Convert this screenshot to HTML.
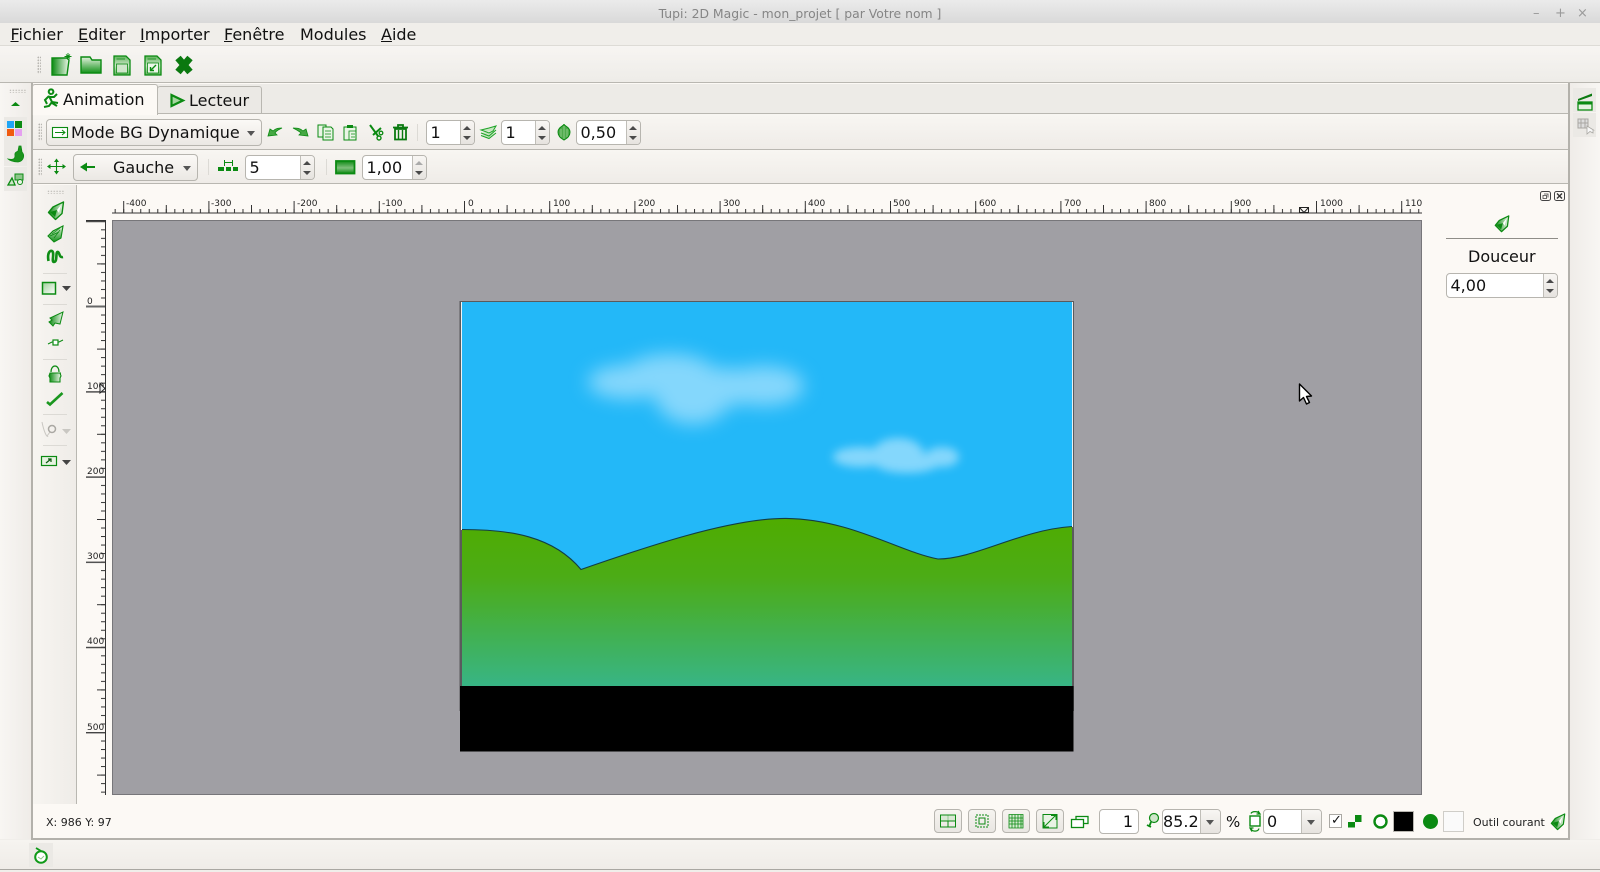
<!DOCTYPE html>
<html lang="fr"><head><meta charset="utf-8"><title>Tupi</title>
<style>
html,body{margin:0;padding:0;width:1600px;height:872px;overflow:hidden;background:#f0eeea}
body{font-family:"DejaVu Sans","Liberation Sans",sans-serif;color:#111;position:relative}
div,span,svg{position:absolute;box-sizing:border-box}
.t{white-space:nowrap}
.m{top:24px;height:23px;line-height:22px;font-size:16px;white-space:nowrap}
.h{left:0;width:1600px}
.sp,.cb{background:#fff;border:1px solid #b7b5af;border-radius:4px}
.sp>span,.cb>span{font-size:16px;line-height:23px;white-space:nowrap;top:0;left:3.5px}
.b{right:0;top:0;bottom:0;width:14px;border-left:1px solid #c0beb8;background:linear-gradient(#f8f6f3,#e6e3df);border-radius:0 3px 3px 0}
.b::before,.b::after{content:"";position:absolute;left:2px;border-left:4.5px solid transparent;border-right:4.5px solid transparent}
.b::before{top:5px;border-bottom:4.5px solid #4a4a4a}
.b::after{bottom:4px;border-top:4.5px solid #4a4a4a}
.b.dis::before{border-bottom-color:#aaa}
.nb{right:0;top:0;bottom:0;width:20px;border-left:1px solid #c0beb8;background:linear-gradient(#f8f6f3,#e6e3df);border-radius:0 3px 3px 0}
.cb{background:linear-gradient(#fbf9f6,#ebe8e4)}
.dd{width:0;height:0;border-left:4.5px solid transparent;border-right:4.5px solid transparent;border-top:5px solid #555}
.tb{background:linear-gradient(#f6f4f0,#e9e6e2);border:1px solid #b7b5af;border-radius:4px;top:809px;height:24px}
.sep{background:#dcdad5}
.hd{width:4px;background-image:radial-gradient(#b5b3ae 0.7px,transparent 0.8px);background-size:2.6px 2.9px}
.hh{height:4px;background-image:radial-gradient(#b5b3ae 0.7px,transparent 0.8px);background-size:2.9px 2.6px}
</style></head><body>

<div class="h" style="top:0;height:23px;background:linear-gradient(#ebebeb,#d9d9d9)"></div>
<div class="t" style="left:0;width:1600px;top:5px;text-align:center;font-size:12.4px;line-height:17px;color:#858585">Tupi: 2D Magic - mon_projet [ par Votre nom ]</div>
<div class="t" style="left:1533px;top:5px;font-size:13px;line-height:17px;color:#9a9a9a">–</div>
<div class="t" style="left:1555px;top:5px;font-size:13px;line-height:17px;color:#9a9a9a">+</div>
<div class="t" style="left:1577px;top:5px;font-size:13px;line-height:17px;color:#9a9a9a">×</div>

<div class="h" style="top:23px;height:23px;background:#f0eeea;border-bottom:1px solid #dddbd6"></div>
<div class="m" style="left:10.500px"><u>F</u>ichier</div>
<div class="m" style="left:78px"><u>E</u>diter</div>
<div class="m" style="left:140px"><u>I</u>mporter</div>
<div class="m" style="left:224px"><u>F</u>enêtre</div>
<div class="m" style="left:300px">Modules</div>
<div class="m" style="left:381px"><u>A</u>ide</div>

<div class="h" style="top:46px;height:37px;background:linear-gradient(#f7f5f2,#eeece8);border-bottom:1px solid #b9b7b1"></div>
<div class="hd" style="left:37px;top:56px;height:18px"></div>

<div style="left:0;top:83px;width:31px;height:756px;background:linear-gradient(90deg,#f8f6f3,#efece8)"></div>
<div class="hh" style="left:9px;top:89px;width:17px"></div>
<div style="left:4px;top:117px;width:23px;height:25px;background:#ebe9e5"></div>
<div style="left:4px;top:142px;width:23px;height:24px;background:#ebe9e5"></div>
<div style="left:4px;top:167px;width:23px;height:24px;background:#ebe9e5"></div>

<div style="left:1569px;top:83px;width:31px;height:756px;background:linear-gradient(90deg,#efece8,#f8f6f3)"></div>
<div style="left:1573px;top:88px;width:23px;height:24px;background:#ebe9e5"></div>
<div style="left:1573px;top:113px;width:23px;height:24px;background:#ebe9e5"></div>

<div class="h" style="top:840px;height:29px;background:linear-gradient(#f6f4f0,#efece8)"></div>
<div class="h" style="top:869px;height:1px;background:#a9a7a2"></div>
<div class="h" style="top:870px;height:2px;background:#f0eeea"></div>

<div style="left:31px;top:83px;width:1539px;height:757px;background:#fcf9f5;border:2px solid #b3b1ab;border-top:0"></div>
<div style="left:33px;top:84px;width:1535px;height:30px;background:#edebe7;border-bottom:1px solid #b9b7b1"></div>
<div style="left:33px;top:114px;width:1535px;height:36px;background:linear-gradient(#f8f6f2,#efece8);border-bottom:1px solid #b9b7b1"></div>
<div style="left:33px;top:150px;width:1535px;height:34px;background:linear-gradient(#f8f6f2,#efece8);border-bottom:1px solid #b9b7b1"></div>

<div style="left:157px;top:86px;width:105px;height:28px;background:#ebe9e5;border:1px solid #b9b7b1;border-radius:3px 3px 0 0"></div>
<div style="left:32px;top:84px;width:126px;height:31px;background:#fcf9f5;border:1px solid #b9b7b1;border-bottom:0;border-radius:3px 3px 0 0"></div>
<div class="t" style="left:63px;top:90px;font-size:16px;line-height:20px">Animation</div>
<div class="t" style="left:189px;top:91px;font-size:16px;line-height:20px">Lecteur</div>

<div class="hd" style="left:38px;top:123px;height:18px"></div>
<div class="cb" style="left:46px;top:119px;width:216px;height:27px"><span style="left:24px;top:1px">Mode BG Dynamique</span><div class="dd" style="left:200px;top:11px"></div></div>
<div class="sep" style="left:417px;top:124px;width:1px;height:17px"></div>
<div class="sp" style="left:426px;top:120px;width:49px;height:25px"><span>1</span><div class="b"></div></div>
<div class="sp" style="left:501px;top:120px;width:49px;height:25px"><span>1</span><div class="b"></div></div>
<div class="sp" style="left:576px;top:120px;width:65px;height:25px"><span>0,50</span><div class="b"></div></div>

<div class="hd" style="left:38px;top:158px;height:18px"></div>
<div class="cb" style="left:73px;top:154px;width:125px;height:27px"><span style="left:39px;top:1px">Gauche</span><div class="dd" style="left:109px;top:11px"></div></div>
<div class="sep" style="left:208px;top:159px;width:1px;height:16px"></div>
<div class="sp" style="left:245px;top:155px;width:70px;height:25px"><span>5</span><div class="b"></div></div>
<div class="sep" style="left:326px;top:159px;width:1px;height:16px"></div>
<div class="sp" style="left:362px;top:155px;width:65px;height:25px"><span>1,00</span><div class="b dis"></div></div>

<div style="left:33px;top:185px;width:44px;height:619px;background:linear-gradient(90deg,#f7f5f1,#efece8);border-right:1px solid #b9b7b1"></div>
<div class="hh" style="left:47px;top:190px;width:17px"></div>
<div class="sep" style="left:43px;top:273px;width:24px;height:1px"></div>
<div class="sep" style="left:43px;top:304px;width:24px;height:1px"></div>
<div class="sep" style="left:43px;top:359px;width:24px;height:1px"></div>
<div class="sep" style="left:43px;top:414px;width:24px;height:1px"></div>
<div class="sep" style="left:43px;top:445px;width:24px;height:1px"></div>

<div style="left:112px;top:220px;width:1310px;height:575px;background:#a09fa4;border:1px solid #77767a"></div>

<div class="tb" style="left:934px;width:28px"></div>
<div class="tb" style="left:968px;width:28px"></div>
<div class="tb" style="left:1002px;width:28px"></div>
<div class="tb" style="left:1036px;width:28px"></div>

<svg style="left:0;top:0" width="1600" height="872" viewBox="0 0 1600 872" font-family="'DejaVu Sans','Liberation Sans',sans-serif">
<defs>
<linearGradient id="gr" x1="0" y1="0" x2="1" y2="1"><stop offset="0" stop-color="#9fd09a"/><stop offset="1" stop-color="#ffffff"/></linearGradient>
<linearGradient id="gh" x1="0" y1="0" x2="1" y2="0"><stop offset="0" stop-color="#0b8a12"/><stop offset="1" stop-color="#eef6ea"/></linearGradient>
<linearGradient id="gv" x1="0" y1="0" x2="0" y2="1"><stop offset="0" stop-color="#e4f1de"/><stop offset="1" stop-color="#13921a"/></linearGradient>
<linearGradient id="gv2" x1="0" y1="0" x2="0" y2="1"><stop offset="0" stop-color="#5fb35c"/><stop offset=".5" stop-color="#cfe7ca"/><stop offset="1" stop-color="#5fb35c"/></linearGradient>
<linearGradient id="gv3" x1="0" y1="0" x2="0" y2="1"><stop offset="0" stop-color="#0f8b15"/><stop offset=".55" stop-color="#7fbf7b"/><stop offset="1" stop-color="#0f8b15"/></linearGradient>
<linearGradient id="land" x1="0" y1="518" x2="0" y2="686" gradientUnits="userSpaceOnUse"><stop offset="0" stop-color="#4fac00"/><stop offset=".35" stop-color="#4cac16"/><stop offset="1" stop-color="#38b585"/></linearGradient>
<filter id="b1" x="-30%" y="-60%" width="160%" height="220%"><feGaussianBlur stdDeviation="9"/></filter>
<filter id="b2" x="-30%" y="-60%" width="160%" height="220%"><feGaussianBlur stdDeviation="4.500"/></filter>
<pattern id="hmin" patternUnits="userSpaceOnUse" x="464" y="0" width="8.52" height="900"><rect width="1" height="900" fill="#333"/></pattern>
<pattern id="hmid" patternUnits="userSpaceOnUse" x="421.4" y="0" width="85.2" height="900"><rect width="1" height="900" fill="#333"/></pattern>
<pattern id="hmaj" patternUnits="userSpaceOnUse" x="464" y="0" width="85.2" height="900"><rect width="1" height="900" fill="#333"/></pattern>
<pattern id="vmin" patternUnits="userSpaceOnUse" x="0" y="306" width="900" height="8.52"><rect width="900" height="1" fill="#333"/></pattern>
<pattern id="vmid" patternUnits="userSpaceOnUse" x="0" y="263.4" width="900" height="85.2"><rect width="900" height="1" fill="#333"/></pattern>
<pattern id="vmaj" patternUnits="userSpaceOnUse" x="0" y="306" width="900" height="85.2"><rect width="900" height="1.4" fill="#444"/></pattern>
<clipPath id="hc"><rect x="112" y="195" width="1310" height="20"/></clipPath>
<clipPath id="frm"><rect x="462" y="302" width="610" height="384"/></clipPath>
<symbol id="pen" viewBox="0 0 18 20"><path d="M16.500 1 L15 12.500 L8.500 18.500 L1.500 11.500 L6 6 Z" fill="url(#gh)" stroke="#0b8a12" stroke-width="1.400" stroke-linejoin="round"/><path d="M3 11 L8 16 L10 9 Z" fill="#0b8a12"/><path d="M10 9 L12 12 L14 4 Z" fill="#fff"/></symbol>
</defs>

<!-- rulers -->
<rect x="112" y="212.500" width="1310" height="1" fill="#333"/>
<rect x="112" y="209" width="1310" height="4" fill="url(#hmin)"/>
<rect x="112" y="205" width="1310" height="8" fill="url(#hmid)"/>
<rect x="112" y="201" width="1310" height="12" fill="url(#hmaj)"/>
<g clip-path="url(#hc)" font-size="9" fill="#222">
<text x="126" y="206">-400</text><text x="211" y="206">-300</text><text x="297" y="206">-200</text><text x="382" y="206">-100</text><text x="468" y="206">0</text><text x="553" y="206">100</text><text x="638" y="206">200</text><text x="723" y="206">300</text><text x="808" y="206">400</text><text x="893" y="206">500</text><text x="979" y="206">600</text><text x="1064" y="206">700</text><text x="1149" y="206">800</text><text x="1234" y="206">900</text><text x="1320" y="206">1000</text><text x="1405" y="206">1100</text>
</g>
<rect x="105" y="221" width="1" height="574" fill="#333"/>
<rect x="101" y="221" width="4" height="574" fill="url(#vmin)"/>
<rect x="97" y="221" width="8" height="574" fill="url(#vmid)"/>
<rect x="86" y="220" width="19" height="575" fill="url(#vmaj)"/>
<rect x="86" y="220" width="20" height="1" fill="#333"/>
<rect x="86" y="305.500" width="19" height="2" fill="#666"/>
<g font-size="9" fill="#222">
<text x="87" y="304">0</text><text x="87" y="389">100</text><text x="87" y="474">200</text><text x="87" y="559">300</text><text x="87" y="644">400</text><text x="87" y="730">500</text>
</g>
<path d="M100 383.500 L105 388.500 L100 393 Z" fill="#eee" stroke="#222" stroke-width="1"/>
<path d="M1299.500 207.500 H1308.500 V212.500 H1299.500 Z M1299.500 207.500 L1304 212.500 L1308.500 207.500" fill="#f4f2ee" stroke="#222" stroke-width="1"/>

<!-- canvas -->
<rect x="459.500" y="301" width="614.500" height="410" fill="#5a5a5c"/>
<rect x="461" y="302" width="1" height="228" fill="#f0f4f6"/>
<rect x="1072" y="302" width="1" height="225" fill="#e8f0f4"/>
<rect x="462" y="302" width="610" height="384" fill="#23b8f8"/>
<g clip-path="url(#frm)">
<g fill="#84d7fc" filter="url(#b1)">
<ellipse cx="628" cy="382" rx="40" ry="17"/><ellipse cx="670" cy="374" rx="46" ry="20"/><ellipse cx="693" cy="395" rx="38" ry="29"/><ellipse cx="725" cy="387" rx="38" ry="19"/><ellipse cx="764" cy="386" rx="40" ry="20"/>
</g>
<g fill="#84d7fc" filter="url(#b2)">
<ellipse cx="860" cy="457" rx="27" ry="10"/><ellipse cx="898" cy="455" rx="26" ry="17"/><ellipse cx="907" cy="463" rx="32" ry="10"/><ellipse cx="942" cy="457" rx="17" ry="10"/>
</g>
</g>
<path d="M462 529.500 C510 529.500 553 536 581 569.500 C640 549 730 518 786 518.400 C850 519 900 552 938 559 C975 559 1020 530 1072 526.500 L1072 686 L462 686 Z" fill="url(#land)"/>
<path d="M462 529.500 C510 529.500 553 536 581 569.500 C640 549 730 518 786 518.400 C850 519 900 552 938 559 C975 559 1020 530 1072 526.500" fill="none" stroke="#123d45" stroke-width="1.100"/>
<rect x="460" y="686" width="613.500" height="65.500" fill="#000"/>

<!-- cursor -->
<path d="M1299.500 384 L1299.500 401 L1303.500 397.500 L1306.500 404 L1309.500 402.500 L1306.500 396.500 L1311.500 396 Z" fill="#fff" stroke="#000" stroke-width="1.400" stroke-linejoin="round"/>

<!-- main toolbar icons -->
<path d="M52 58 H67 L69 60 L67 75 H52 Z" fill="url(#gh)" stroke="#0b8a12" stroke-width="1.400"/>
<path d="M68 53 V60 M64.500 56.500 H71.500 M66 54.500 L70 58.500 M70 54.500 L66 58.500" stroke="#0b8a12" stroke-width=".9"/>
<path d="M81 73 V57 H90 L92 60 H101 V73 Z" fill="url(#gv)" stroke="#0b8a12" stroke-width="1.400"/>
<path d="M114 56 H126 L130 60 V75 H114 Z" fill="url(#gv2)" stroke="#0b8a12" stroke-width="1.300"/>
<rect x="116.500" y="64" width="11" height="9" fill="#cfe6ca" stroke="#0b8a12" stroke-width=".8"/>
<path d="M116.500 59 H125" stroke="#0b8a12" stroke-width=".8"/>
<path d="M145 56 H157 L161 60 V75 H145 Z" fill="url(#gv2)" stroke="#0b8a12" stroke-width="1.300"/>
<rect x="147.500" y="63" width="11" height="10" fill="#eef6ea" stroke="#0b8a12" stroke-width=".8"/>
<path d="M147.500 59 H156" stroke="#0b8a12" stroke-width=".8"/>
<path d="M156 65 L151 70 M150.500 67 V70.500 H154" stroke="#0b8a12" stroke-width="1.400" fill="none"/>
<path d="M178 58 L190 72 M190 58 L178 72" stroke="#0a780f" stroke-width="7"/>

<!-- tab icons -->
<path d="M51 94 a2.300 2.300 0 1 1 .1 0 M49 96 L52 102 L58 103 M49 96 L45 100 L47 104 M52 102 L49 106 L44 107 M52 103 L57 106 M49 97 L54 97 L57 94" stroke="#0b8a12" stroke-width="2" fill="none"/>
<path d="M171.500 95 L183 100.500 L171.500 106 Z" fill="#a6d6a0" stroke="#0b8a12" stroke-width="2.200"/>

<!-- row 1 icons -->
<rect x="52.500" y="127.500" width="15" height="10" fill="#fff" stroke="#0b8a12" stroke-width="1.100"/>
<path d="M55 132.500 H65 M62 130 L65 132.500 L62 135" stroke="#0b8a12" fill="none"/>
<path d="M268 136 L270 129 L273 131 C276 128 279 128 282 128 C278 130 276 131 275 133 L277 135 Z" fill="#46a844" stroke="#0b8a12" stroke-width=".8"/>
<path d="M308 136 L306 129 L303 131 C300 128 297 128 293 128 C297 130 299 131 301 133 L299 135 Z" fill="#46a844" stroke="#0b8a12" stroke-width=".8"/>
<path d="M318 125 H326 V137 H318 Z" fill="#eaf5e6" stroke="#0b8a12"/><path d="M323 127 H331 L333 129 V140 H323 Z" fill="#eaf5e6" stroke="#0b8a12"/><path d="M325 131 H331 M325 134 H331 M325 137 H331" stroke="#0b8a12" stroke-width=".8"/>
<path d="M344 127 H356 V140 H344 Z" fill="#eaf5e6" stroke="#0b8a12"/><rect x="347" y="125" width="6" height="3" fill="#0b8a12"/><path d="M349 131 H356 V140 H349 Z M351 134 H355 M351 137 H355" fill="none" stroke="#0b8a12" stroke-width=".8"/>
<path d="M370 125 L378 136 M381 128 L373 135" stroke="#0b8a12" stroke-width="2"/><circle cx="379" cy="138" r="2" fill="none" stroke="#0b8a12" stroke-width="1.400"/><circle cx="381" cy="133" r="1.800" fill="none" stroke="#0b8a12" stroke-width="1.300"/>
<path d="M393 127.500 H408 M398 127 V125 H403 V127 M395 129 H406 V139.500 H395 Z" fill="none" stroke="#0a7a10" stroke-width="1.800"/><path d="M398.500 130 V139 M402.500 130 V139" stroke="#0a7a10" stroke-width="1.400"/>
<path d="M481 130 L489 128 L496 126 L493 131 L489 133 Z M481 133 L489 136 L496 130 M481 135.500 L489 138.500 L496 133" fill="#c6e6c0" stroke="#1fa428" stroke-width="1"/>
<path d="M564 124 C564 126 558 127 558 132 C558 137 562 139 564 140 C566 139 570 137 570 132 C570 127 564 126 564 124 Z" fill="#4eaa4b" stroke="#0b8a12"/><path d="M564 126 V139 M561 129 V137 M567 129 V137" stroke="#a5d8a0" stroke-width=".7"/>

<!-- row 2 icons -->
<path d="M48 166.500 H65 M56.500 160 V173" stroke="#0b8a12" stroke-width="1.100"/><path d="M47 166.500 L50.500 164 V169 Z M66 166.500 L62.500 164 V169 Z M56.500 158.500 L54 162 H59 Z M56.500 174.500 L54 171 H59 Z" fill="#0b8a12"/>
<path d="M82 167 H95" stroke="#0b8a12" stroke-width="2"/><path d="M80 167 L87 162.500 V171.500 Z" fill="#0b8a12"/>
<path d="M218 167 H224 V171 H218 Z M226 167 H231 V171 H226 Z M233 167 H238 V171 H233 Z" fill="#0b8a12"/><path d="M225 162.500 H232 M224.500 160 V166 M232.500 160 V166" stroke="#0b8a12"/>
<rect x="336" y="161" width="18.500" height="12.500" fill="url(#gv3)" stroke="#0b8a12" stroke-width="1.800"/>

<!-- left sidebar icons -->
<path d="M11 106 L15.500 102 L20 106 Z" fill="#0b8a12"/>
<rect x="7" y="121" width="7" height="7" fill="#1fa5f5"/><rect x="15" y="121" width="7" height="7" fill="#0b8a12"/><rect x="7" y="129" width="7" height="7" fill="#f05a10"/><rect x="15" y="129" width="7" height="7" fill="#e5a0f0"/>
<path d="M19 146 L21 146 L22 152 C25 155 24 161 18 162 C13 162 9 160 8 159 C13 160 15 159 15 156 C14 152 17 152 18 151 Z" fill="#1b931c" stroke="#0b8a12" stroke-width=".8"/>
<path d="M12 178 L8 185 H15 Z" fill="#cfe6ca" stroke="#0b8a12" stroke-width="1.300"/><rect x="15" y="174" width="8" height="6" fill="#8dc68a" stroke="#0b8a12"/><circle cx="20" cy="182" r="2.500" fill="#e9f4e5" stroke="#0b8a12"/>

<!-- tools -->
<use href="#pen" x="47" y="201" width="18" height="20"/>
<path d="M63 226 L61 238 L54 242 L48 236 L53 231 Z" fill="url(#gv)" stroke="#0b8a12" stroke-width="1.100"/><path d="M52 234 L60 228 M54 238 L60 230 M50 236 L59 232" stroke="#0b8a12" stroke-width=".7"/>
<path d="M48.500 261 C47 253 50 250 52 251 C55 253 51 262 54 262 C58 262 55 251 58 252 C60 253 59 258 63 257" fill="none" stroke="#0f8d16" stroke-width="2.600" stroke-linejoin="round"/>
<rect x="42.500" y="282.500" width="13" height="11.500" fill="url(#gr)" stroke="#0b8a12" stroke-width="1.500"/>
<path d="M62 286 H71 L66.500 291 Z" fill="#444"/>
<path d="M63 312 L60 324 L55 323 L53 326 L49 322 L52 320 L50 318 Z" fill="url(#gh)" stroke="#0b8a12"/>
<path d="M48 344 L52 342 H59 L63 340" stroke="#0b8a12" fill="none"/><rect x="53" y="340" width="5" height="5" fill="#fff" stroke="#0b8a12" stroke-width="1.200"/>
<path d="M49.500 373 H61 M50 373 H60 L61 376 L60 378 V382 H50 V378 L49 376 Z" fill="url(#gh)" stroke="#0b8a12" stroke-width="1.100"/><path d="M51 372 C51 364 59 364 59 372" fill="none" stroke="#0b8a12" stroke-width="1.200"/>
<path d="M47 402 L50 404.500 L62.500 393" stroke="#1a971f" stroke-width="2.600" fill="none"/>
<path d="M42 422 C44 432 47 438 48 436 M47 436 L50 432" stroke="#c9c7c2" fill="none"/><circle cx="52" cy="429" r="3.500" fill="none" stroke="#aaa8a3" stroke-width="1.500"/>
<path d="M62 429 H71 L66.500 434 Z" fill="#c9c7c2"/>
<rect x="41.500" y="456.500" width="15" height="9" fill="#e6f2e1" stroke="#0b8a12" stroke-width="1.200"/><path d="M46 463 L51 459 M48 459 H51 V462" stroke="#0b5a10" stroke-width="1.200" fill="none"/>
<path d="M62 460 H71 L66.500 465 Z" fill="#444"/>

<!-- right sidebar -->
<path d="M1578 99 L1592 93.500 V96 L1578 101 Z" fill="#0b7a10"/><rect x="1578" y="102" width="14" height="8" fill="#e7f2e2" stroke="#0b8a12" stroke-width="1.300"/><rect x="1578" y="102" width="14" height="2.500" fill="#0b8a12"/>
<path d="M1578 119 H1588 V128 H1578 Z M1581 119 V128 M1585 119 V128 M1578 123 H1588" fill="#ddd" stroke="#a9a7a2"/><path d="M1587 126 V134 L1590 131.500 L1593 133 L1593 130 H1593.500 Z" fill="#f8f8f8" stroke="#a9a7a2" stroke-width=".8"/>

<!-- dock -->
<rect x="1540.500" y="191.500" width="10" height="9" rx="2" fill="none" stroke="#444"/>
<path d="M1544 194 H1548 V197.500 M1543 195.500 H1546.500 V198.500 H1543 Z" fill="none" stroke="#444" stroke-width=".8"/>
<rect x="1554.500" y="191.500" width="10" height="9" rx="2" fill="none" stroke="#444"/>
<path d="M1557 193.500 L1562 198.500 M1562 193.500 L1557 198.500" stroke="#333" stroke-width="1.400"/>
<use href="#pen" x="1493" y="215" width="18" height="18"/>
<rect x="1446" y="238" width="112" height="1" fill="#8f8d88"/>

<!-- status row icons -->
<rect x="940.500" y="815" width="15" height="12" fill="none" stroke="#0b8a12"/><path d="M940.500 821 H955.500 M948 815 V827" stroke="#0b8a12"/><rect x="941" y="815.500" width="14" height="5" fill="#cfe6ca" opacity=".7"/>
<rect x="976" y="815" width="12" height="12" fill="none" stroke="#0b8a12" stroke-dasharray="2 1"/><rect x="979" y="818" width="6" height="6" fill="none" stroke="#0b8a12"/>
<path d="M1009 814.500 H1023 V828 H1009 Z M1012 814.500 V828 M1015 814.500 V828 M1018 814.500 V828 M1021 814.500 V828 M1009 818 H1023 M1009 821 H1023 M1009 824 H1023" fill="#d7ead2" stroke="#0b8a12" stroke-width=".8"/>
<rect x="1043" y="814.500" width="14" height="13.500" fill="#e8f3e4" stroke="#0b8a12"/><path d="M1044 827 L1056 815 M1044 822 V827 H1049 M1051 815.500 H1056 V820" stroke="#0b8a12" fill="none"/>
<rect x="1076" y="816.500" width="12" height="7" fill="#fff" stroke="#0b8a12" stroke-width="1.300"/><rect x="1071.500" y="819.500" width="12" height="8" fill="#fff" stroke="#0b8a12" stroke-width="1.300"/>
<circle cx="1154" cy="818" r="4.500" fill="#cfe6ca" stroke="#0b8a12" stroke-width="1.200"/><path d="M1151 822 L1149 827 M1147 825 L1151 827" stroke="#0b8a12" stroke-width="1.800"/>
<rect x="1250" y="816" width="10" height="10" fill="#fff" stroke="#0b8a12" stroke-width="1.400"/><path d="M1251 813.500 C1252 811 1258 811 1259 813.500 M1258 811 L1260 814 L1256.500 814 M1251 828.500 C1252 832 1258 832 1259 828.500 M1252 831.500 L1250 828 L1253.500 828" fill="none" stroke="#0b8a12" stroke-width="1.300"/>
<path d="M1348 822 H1355 V815 H1361.500 V822 H1355 V827.500 H1348 Z" fill="#0b8a12"/>
<circle cx="1380.500" cy="821.500" r="6" fill="#fff" stroke="#0b8a12" stroke-width="2.400"/>
<rect x="1393.500" y="811.500" width="20" height="20" fill="#000" stroke="#b9b7b1"/>
<circle cx="1430.500" cy="821.500" r="7.500" fill="#0b8a12"/>
<rect x="1443.500" y="811.500" width="20" height="20" fill="#fafafa" stroke="#cfcdc8"/>
<use href="#pen" x="1550" y="813" width="16" height="18"/>

<!-- status bar timer -->
<rect x="29" y="843" width="24" height="24" fill="#ebe9e5"/>
<circle cx="41" cy="857" r="5.800" fill="#fff" stroke="#0f9a18" stroke-width="2"/><path d="M36 848 L41 851" stroke="#0f9a18" stroke-width="1.800"/><path d="M38 857 L41 859 L44 856" stroke="#8cc888" fill="none"/>
</svg>

<div class="t" style="left:1468px;top:247px;font-size:16px;line-height:20px;">Douceur</div>
<div class="sp" style="left:1446px;top:273px;width:112px;height:25px"><span>4,00</span><div class="b"></div></div>

<div class="t" style="left:46px;top:815px;font-size:11px;line-height:16px;color:#222">X: 986 Y: 97</div>

<div class="sp" style="left:1099px;top:809px;width:40px;height:25px"><span style="left:auto;right:5px">1</span></div>
<div class="cb" style="left:1162px;top:809px;width:59px;height:25px;background:#fff"><span style="left:0">85.2</span><div class="nb"></div><div class="dd" style="left:43px;top:10px"></div></div>
<div class="t" style="left:1226px;top:812px;font-size:15px;line-height:20px">%</div>
<div class="cb" style="left:1263px;top:809px;width:59px;height:25px;background:#fff"><span style="left:3px">0</span><div class="nb"></div><div class="dd" style="left:43px;top:10px"></div></div>
<div style="left:1329px;top:814px;width:13px;height:14px;background:#fff;border:1px solid #aaa8a3"></div>
<div class="t" style="left:1331px;top:812px;font-size:13px;line-height:18px;font-weight:bold">✓</div>
<div class="t" style="left:1473px;top:815px;font-size:11px;line-height:16px;color:#222">Outil courant</div>
</body></html>
